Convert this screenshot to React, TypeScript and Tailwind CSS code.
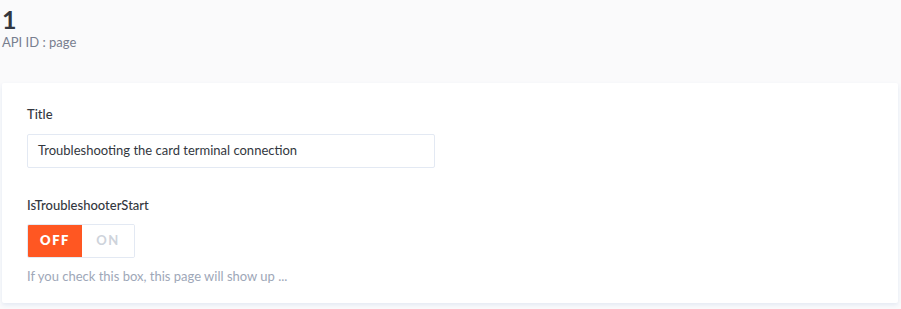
import React from "react";

export default function App() {
  return (
    <div className="w-[901px] h-[309px] bg-[#fafafb] overflow-hidden" style={{ fontFamily: "Lato, 'Open Sans', sans-serif" }}>
      <div className="pl-[2px] pt-[5px]">
        <div className="text-[25px] font-bold leading-[28px] text-[#333740]">1</div>
        <div className="mt-[1px] text-[13px] leading-[16px] text-[#787e8f]">API ID : page</div>
      </div>
      <div className="ml-[2px] mt-[33px] w-[896px] h-[220px] bg-white rounded-[2px] shadow-[0_2px_4px_#e3e9f3] px-[25px] pt-[23px]">
        <div className="text-[13px] leading-[16px] font-medium text-[#333740]">Title</div>
        <div className="mt-[12px] w-[408px] h-[34px] border border-[#e3e9f3] rounded-[2px] flex items-center px-[10px] text-[13px] text-[#333740]">
          Troubleshooting the card terminal connection
        </div>
        <div className="mt-[29px] text-[13px] leading-[16px] font-medium text-[#333740]">IsTroubleshooterStart</div>
        <div className="mt-[11px] flex w-[108px] h-[34px] border border-[#e3e9f3] rounded-[2px] overflow-hidden">
          <div className="w-[54px] h-full bg-[#ff5722] text-white text-[13px] font-extrabold tracking-[1.5px] flex items-center justify-center">OFF</div>
          <div className="flex-1 h-full bg-white text-[#ced3db] text-[13px] font-bold tracking-[1.5px] flex items-center justify-center">ON</div>
        </div>
        <div className="mt-[10px] text-[13px] leading-[16px] text-[#9ea7b8]">If you check this box, this page will show up ...</div>
      </div>
    </div>
  );
}
